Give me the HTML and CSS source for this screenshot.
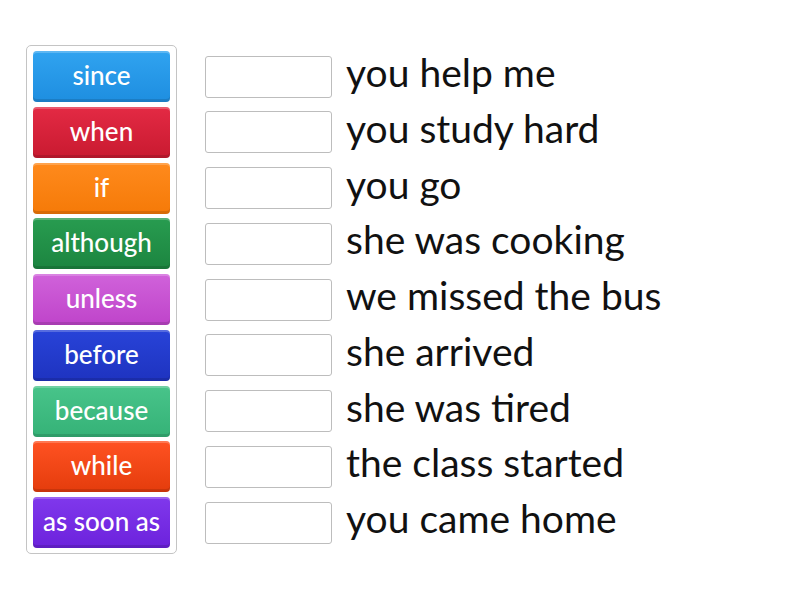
FILE: index.html
```html
<!DOCTYPE html>
<html>
<head>
<meta charset="utf-8">
<link rel="stylesheet" href="styles.css">
</head>
<body>
<div class="game">
  <div class="bank">
    <div class="tile c1">since</div>
    <div class="tile c2">when</div>
    <div class="tile c3">if</div>
    <div class="tile c4">although</div>
    <div class="tile c5">unless</div>
    <div class="tile c6">before</div>
    <div class="tile c7">because</div>
    <div class="tile c8">while</div>
    <div class="tile c9">as soon as</div>
  </div>
  <div class="rows">
    <div class="row"><div class="slot"></div><span class="phrase">you help me</span></div>
    <div class="row"><div class="slot"></div><span class="phrase">you study hard</span></div>
    <div class="row"><div class="slot"></div><span class="phrase">you go</span></div>
    <div class="row"><div class="slot"></div><span class="phrase">she was cooking</span></div>
    <div class="row"><div class="slot"></div><span class="phrase">we missed the bus</span></div>
    <div class="row"><div class="slot"></div><span class="phrase">she arrived</span></div>
    <div class="row"><div class="slot"></div><span class="phrase">she was tired</span></div>
    <div class="row"><div class="slot"></div><span class="phrase">the class started</span></div>
    <div class="row"><div class="slot"></div><span class="phrase">you came home</span></div>
  </div>
</div>
</body>
</html>
```

FILE: styles.css
```css
html, body {
  margin: 0;
  padding: 0;
  background: #fff;
}
body {
  font-family: Lato, "Noto Sans", sans-serif;
}
.game {
  display: flex;
  align-items: flex-start;
  padding: 45px 0 0 26px;
}
.bank {
  display: flex;
  flex-direction: column;
  gap: 4.75px;
  padding: 5px 6px 5px 6px;
  border: 1px solid #c4c4c4;
  border-radius: 5px;
}
.tile {
  width: 137px;
  height: 51px;
  box-sizing: border-box;
  border-radius: 4px;
  display: flex;
  align-items: center;
  justify-content: center;
  color: #fff;
  font-size: 26px;
  font-weight: 500;
  line-height: 1;
  padding-bottom: 3px;
  box-shadow: inset 0 2px 0 rgba(255,255,255,0.22), inset 0 -3px 0 rgba(0,0,0,0.12);
}
.c1 { background: linear-gradient(#30a3f0, #1e8ee0); }
.c2 { background: linear-gradient(#e32a44, #c91a30); }
.c3 { background: linear-gradient(#ff8a1c, #f57a08); }
.c4 { background: linear-gradient(#289c50, #1c8540); }
.c5 { background: linear-gradient(#d062da, #bf44ca); }
.c6 { background: linear-gradient(#2843d8, #1e33c0); }
.c7 { background: linear-gradient(#48c48a, #35b277); }
.c8 { background: linear-gradient(#ff5222, #e43c0c); }
.c9 { background: linear-gradient(#8038ec, #6c22dc); }
.rows {
  display: flex;
  flex-direction: column;
  gap: 4.75px;
  margin-left: 28px;
  padding-top: 6px;
}
.row {
  height: 51px;
  display: flex;
  align-items: center;
}
.slot {
  width: 127px;
  height: 42px;
  box-sizing: border-box;
  border: 1px solid #bdbdbd;
  border-radius: 3px;
  background: #fff;
  flex: none;
}
.phrase {
  margin-left: 14px;
  font-size: 39px;
  color: #111;
  line-height: 1;
  position: relative;
  top: -4px;
}
```
